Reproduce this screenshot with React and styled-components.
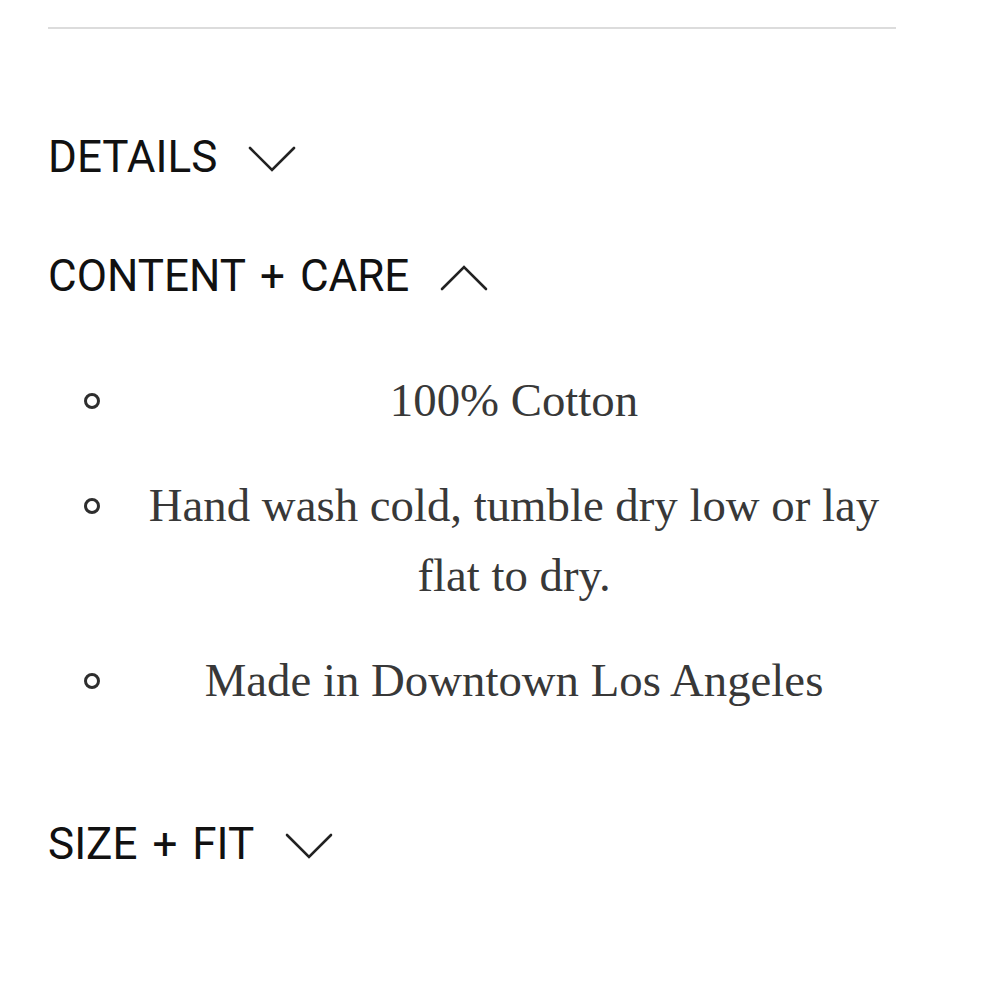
import React from 'react'
import styled, { createGlobalStyle } from 'styled-components'

const GlobalStyle = createGlobalStyle`
    html, body
    {
        margin: 0;
        padding: 0;
        background-color: #ffffff;
    }
`
const Page = styled.div`
    width: 1000px;
    min-height: 1000px;
    padding: 27px 104px 0 48px;
    box-sizing: border-box;
    background-color: #ffffff;
`
const Divider = styled.div`
    height: 2px;
    background-color: #dcdcdc;
`
const SectionHeader = styled.div`
    display: flex;
    align-items: center;
    gap: 31px;
    margin-top: ${({ top }) => top}px;
    height: 44px;
    cursor: pointer;
`
const SectionTitle = styled.h2`
    margin: 0;
    font-family: Roboto, "Liberation Sans", sans-serif;
    font-weight: 400;
    font-size: 44px;
    line-height: 44px;
    color: #111111;
    word-spacing: 4px;
`
const Chevron = styled.svg`
    width: 48px;
    height: 26px;
    margin-top: 3px;
    flex-shrink: 0;
`
const CareList = styled.ul`
    list-style: none;
    margin: 67px 0 0 0;
    padding: 0 0 0 36px;
    display: flex;
    flex-direction: column;
    gap: 35px;
`
const CareItem = styled.li`
    display: flex;
    align-items: flex-start;
    gap: 32px;
`
const Bullet = styled.span`
    width: 16px;
    height: 16px;
    margin-top: 28px;
    border: 3px solid #2e2e2e;
    border-radius: 50%;
    box-sizing: border-box;
    flex-shrink: 0;
`
const CareText = styled.p`
    flex: 1;
    margin: 0;
    text-align: center;
    font-family: "Liberation Serif", "Times New Roman", serif;
    font-size: 46.8px;
    line-height: 70px;
    color: #383838;
`

function Arrow({ open }) {
    return (
        <Chevron viewBox="0 0 48 26">
            <polyline
                points={open ? "2,24 24,2 46,24" : "2,2 24,24 46,2"}
                fill="none"
                stroke="#222222"
                strokeWidth="2.6"
                strokeLinecap="round"
                strokeLinejoin="miter"
            />
        </Chevron>
    )
}

const care = [
    "100% Cotton",
    "Hand wash cold, tumble dry low or lay flat to dry.",
    "Made in Downtown Los Angeles"
]

export default function App() {
    return (
        <>
            <GlobalStyle />
            <Page>
                <Divider />
                <SectionHeader top={106}>
                    <SectionTitle>DETAILS</SectionTitle>
                    <Arrow />
                </SectionHeader>
                <SectionHeader top={75}>
                    <SectionTitle>CONTENT + CARE</SectionTitle>
                    <Arrow open />
                </SectionHeader>
                <CareList>
                    {care.map(text => (
                        <CareItem key={text}>
                            <Bullet />
                            <CareText>{text}</CareText>
                        </CareItem>
                    ))}
                </CareList>
                <SectionHeader top={107}>
                    <SectionTitle>SIZE + FIT</SectionTitle>
                    <Arrow />
                </SectionHeader>
            </Page>
        </>
    )
}
